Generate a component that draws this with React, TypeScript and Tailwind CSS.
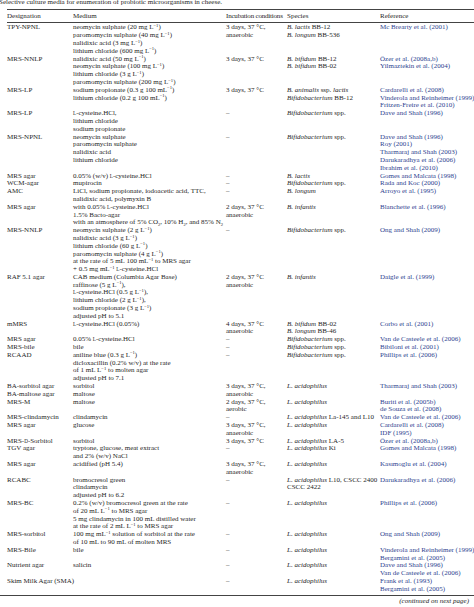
import React from "react";

const Sup = ({ children }: { children: React.ReactNode }) => (
  <span className="relative -top-[2.4px] text-[4.6px] leading-none">{children}</span>
);
const Sub = ({ children }: { children: React.ReactNode }) => (
  <span className="relative top-[1.4px] text-[4.6px] leading-none">{children}</span>
);
const Lp = () => (
  <>
    L<Sup>−1</Sup>
  </>
);
const SL = () => <span className="text-[5.2px]">L</span>;
const Cys = () => (
  <>
    <SL />
    -cysteine.HCl
  </>
);
const I = ({ children }: { children: React.ReactNode }) => <i>{children}</i>;

type Row = {
  d: React.ReactNode;
  m: React.ReactNode[];
  i: React.ReactNode[];
  s: React.ReactNode[];
  r: string[];
};

const LA = <I>L. acidophilus</I>;
const BS = (
  <>
    <I>Bifidobacterium</I> spp.
  </>
);

const rows: Row[] = [
  {
    d: "TPY-NPNL",
    m: [
      <>neomycin sulphate (20 mg <Lp />)</>,
      <>paromomycin sulphate (40 mg <Lp />)</>,
      <>nalidixic acid (3 mg <Lp />)</>,
      <>lithium chloride (600 mg <Lp />)</>,
    ],
    i: ["3 days, 37 °C,", "anaerobic"],
    s: [
      <><I>B. lactis</I> BB-12</>,
      <><I>B. longum</I> BB-536</>,
    ],
    r: ["Mc Brearty et al. (2001)"],
  },
  {
    d: "MRS-NNLP",
    m: [
      <>nalidixic acid (50 mg <Lp />)</>,
      <>neomycin sulphate (100 mg <Lp />)</>,
      <>lithium chloride (3 g <Lp />)</>,
      <>paromomycin sulphate (200 mg <Lp />)</>,
    ],
    i: ["3 days, 37 °C"],
    s: [
      <><I>B. bifidum</I> BB-12</>,
      <><I>B. bifidum</I> BB-02</>,
    ],
    r: ["Özer et al. (2008a,b)", "Yilmaztekin et al. (2004)"],
  },
  {
    d: "MRS-LP",
    m: [
      <>sodium propionate (0.3 g 100 m<Lp />)</>,
      <>lithium chloride (0.2 g 100 m<Lp />)</>,
    ],
    i: ["3 days, 37 °C"],
    s: [
      <><I>B. animalis</I> ssp. <I>lactis</I></>,
      <><I>Bifidobacterium</I> BB-12</>,
    ],
    r: ["Cardarelli et al. (2008)", "Vinderola and Reinheimer (1999)", "Fritzen-Freire et al. (2010)"],
  },
  {
    d: "MRS-LP",
    m: [<><Cys />,</>, "lithium chloride", "sodium propionate"],
    i: ["–"],
    s: [BS],
    r: ["Dave and Shah (1996)"],
  },
  {
    d: "MRS-NPNL",
    m: ["neomycin sulphate", "paromomycin sulphate", "nalidixic acid", "lithium chloride"],
    i: ["–"],
    s: [BS],
    r: [
      "Dave and Shah (1996)",
      "Roy (2001)",
      "Tharmaraj and Shah (2003)",
      "Darukaradhya et al. (2006)",
      "Ibrahim et al. (2010)",
    ],
  },
  {
    d: "MRS agar",
    m: [<>0.05% (w/v) <Cys /></>],
    i: ["–"],
    s: [<I>B. lactis</I>],
    r: ["Gomes and Malcata (1998)"],
  },
  { d: "WCM-agar", m: ["mupirocin"], i: ["–"], s: [BS], r: ["Rada and Koc (2000)"] },
  {
    d: "AMC",
    m: ["LiCl, sodium propionate, iodoacetic acid, TTC,", "nalidixic acid, polymyxin B"],
    i: ["–"],
    s: [<I>B. longum</I>],
    r: ["Arroyo et al. (1995)"],
  },
  {
    d: "MRS agar",
    m: [
      <>with 0.05% <Cys /></>,
      "1.5% Bacto-agar",
      <>
        with an atmosphere of 5% CO<Sub>2</Sub>, 10% H<Sub>2</Sub>, and 85% N<Sub>2</Sub>
      </>,
    ],
    i: ["2 days, 37 °C", "anaerobic"],
    s: [<I>B. infantis</I>],
    r: ["Blanchette et al. (1996)"],
  },
  {
    d: "MRS-NNLP",
    m: [
      <>neomycin sulphate (2 g <Lp />)</>,
      <>nalidixic acid (3 g <Lp />)</>,
      <>lithium chloride (60 g <Lp />)</>,
      <>paromomycin sulphate (4 g <Lp />)</>,
      <>at the rate of 5 mL 100 m<Lp /> to MRS agar</>,
      <>+ 0.5 mg m<Lp /> <Cys /></>,
    ],
    i: ["–"],
    s: [BS],
    r: ["Ong and Shah (2009)"],
  },
  {
    d: "RAF 5.1 agar",
    m: [
      "CAB medium (Columbia Agar Base)",
      <>raffinose (5 g <Lp />),</>,
      <><Cys /> (0.5 g <Lp />),</>,
      <>lithium chloride (2 g <Lp />),</>,
      <>sodium propionate (3 g <Lp />)</>,
      "adjusted pH to 5.1",
    ],
    i: ["2 days, 37 °C", "anaerobic"],
    s: [<I>B. infantis</I>],
    r: ["Daigle et al. (1999)"],
  },
  {
    d: "mMRS",
    m: [<><Cys /> (0.05%)</>],
    i: ["4 days, 37 °C", "anaerobic"],
    s: [
      <><I>B. bifidum</I> BB-02</>,
      <><I>B. longum</I> BB-46</>,
    ],
    r: ["Corbo et al. (2001)"],
  },
  {
    d: "MRS agar",
    m: [<>0.05% <Cys /></>],
    i: ["–"],
    s: [BS],
    r: ["Van de Casteele et al. (2006)"],
  },
  { d: "MRS-bile", m: ["bile"], i: ["–"], s: [BS], r: ["Bibiloni et al. (2001)"] },
  {
    d: "RCAAD",
    m: [
      <>aniline blue (0.3 g <Lp />)</>,
      "dicloxacillin (0.2% w/v) at the rate",
      <>of 1 mL <Lp /> to molten agar</>,
      "adjusted pH to 7.1",
    ],
    i: ["–"],
    s: [BS],
    r: ["Phillips et al. (2006)"],
  },
  {
    d: "BA-sorbitol agar",
    m: ["sorbitol"],
    i: ["3 days, 37 °C,"],
    s: [LA],
    r: ["Tharmaraj and Shah (2003)"],
  },
  { d: "BA-maltose agar", m: ["maltose"], i: ["anaerobic"], s: [], r: [] },
  {
    d: "MRS-M",
    m: ["maltose"],
    i: ["2 days, 37 °C,", "aerobic"],
    s: [LA],
    r: ["Buriti et al. (2005b)", "de Souza et al. (2008)"],
  },
  {
    d: "MRS-clindamycin",
    m: ["clindamycin"],
    i: ["–"],
    s: [<><I>L. acidophilus</I> La-145 and L10</>],
    r: ["Van de Casteele et al. (2006)"],
  },
  {
    d: "MRS agar",
    m: ["glucose"],
    i: ["3 days, 37 °C,", "anaerobic"],
    s: [LA],
    r: ["Cardarelli et al. (2008)", "IDF (1995)"],
  },
  {
    d: (
      <>
        MRS-<span className="text-[5.2px]">D</span>-Sorbitol
      </>
    ),
    m: ["sorbitol"],
    i: ["3 days, 37 °C"],
    s: [<><I>L. acidophilus</I> LA-5</>],
    r: ["Özer et al. (2008a,b)"],
  },
  {
    d: "TGV agar",
    m: ["tryptone, glucose, meat extract", "and 2% (w/v) NaCl"],
    i: ["–"],
    s: [<><I>L. acidophilus</I> Ki</>],
    r: ["Gomes and Malcata (1998)"],
  },
  {
    d: "MRS agar",
    m: ["acidified (pH 5.4)"],
    i: ["3 days, 37 °C,", "anaerobic"],
    s: [LA],
    r: ["Kasımoglu et al. (2004)"],
  },
  {
    d: "RCABC",
    m: ["bromocresol green", "clindamycin", "adjusted pH to 6.2"],
    i: ["–"],
    s: [<><I>L. acidophilus</I> L10, CSCC 2400</>, "CSCC 2422"],
    r: ["Darukaradhya et al. (2006)"],
  },
  {
    d: "MRS-BC",
    m: [
      "0.2% (w/v) bromocresol green at the rate",
      <>of 20 mL <Lp /> to MRS agar</>,
      "5 mg clindamycin in 100 mL distilled water",
      <>at the rate of 2 mL <Lp /> to MRS agar</>,
    ],
    i: ["–"],
    s: [LA],
    r: ["Phillips et al. (2006)"],
  },
  {
    d: "MRS-sorbitol",
    m: [<>100 mg m<Lp /> solution of sorbitol at the rate</>, "of 10 mL to 90 mL of molten MRS"],
    i: ["–"],
    s: [LA],
    r: ["Ong and Shah (2009)"],
  },
  {
    d: "MRS-Bile",
    m: ["bile"],
    i: ["–"],
    s: [LA],
    r: ["Vinderola and Reinheimer (1999)", "Bergamini et al. (2005)"],
  },
  {
    d: "Nutrient agar",
    m: ["salicin"],
    i: ["–"],
    s: [LA],
    r: ["Dave and Shah (1996)", "Van de Casteele et al. (2006)"],
  },
  {
    d: "Skim Milk Agar (SMA)",
    m: [],
    i: ["–"],
    s: [LA],
    r: ["Frank et al. (1993)", "Bergamini et al. (2005)"],
  },
];

const Cell = ({ lines, className = "" }: { lines: React.ReactNode[]; className?: string }) => (
  <div className={className}>
    {lines.map((l, k) => (
      <div key={k} className="h-[7.8px] whitespace-nowrap">
        {l}
      </div>
    ))}
  </div>
);

export default function App() {
  return (
    <div
      className="w-[474px] h-[607px] overflow-hidden bg-white text-[#262626] text-[7px] leading-[7.8px]"
      style={{ fontFamily: '"Liberation Serif", "DejaVu Serif", serif' }}
    >
      <div className="-mt-[1px] -ml-[1px] h-[8px] whitespace-nowrap">
        Selective culture media for enumeration of probiotic microorganisms in cheese.
      </div>
      <div className="ml-[7px] w-[560px] mt-[2px] border-t-[0.8px] border-[#444]">
        <div className="grid grid-cols-[66px_153px_61px_93px_187px] pt-[3px] pb-[1px] border-b-[0.8px] border-[#444]">
          <div>Designation</div>
          <div>Medium</div>
          <div className="whitespace-nowrap tracking-[-0.2px]">Incubation conditions</div>
          <div>Species</div>
          <div>Reference</div>
        </div>
        <div className="grid grid-cols-[66px_153px_61px_93px_187px] pt-[1.6px]">
          {rows.map((r, k) => (
            <React.Fragment key={k}>
              <Cell lines={[r.d]} />
              <Cell lines={r.m} />
              <Cell lines={r.i} />
              <Cell lines={r.s} />
              <Cell lines={r.r} className="text-[#2e3f8f]" />
            </React.Fragment>
          ))}
        </div>
      </div>
      <div className="mt-[1px] border-t-[0.8px] border-[#444]" />
      <div className="pr-[5px] pt-[2px] text-right italic whitespace-nowrap">(continued on next page)</div>
    </div>
  );
}
